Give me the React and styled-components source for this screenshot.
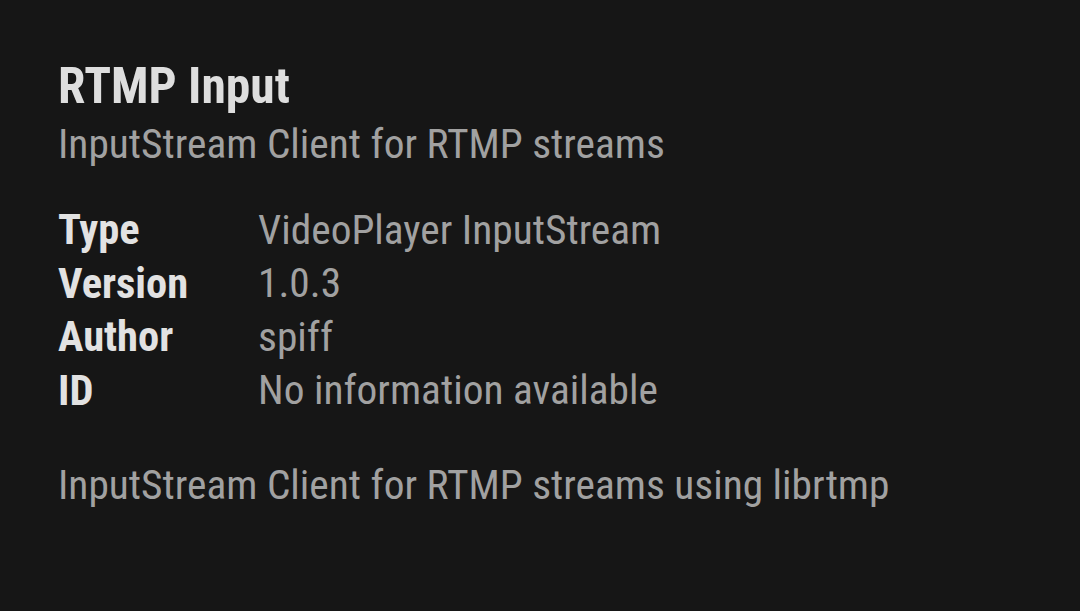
import React from "react";
import styled, { createGlobalStyle } from "styled-components";

const GlobalStyle = createGlobalStyle`
  html, body {
    margin: 0;
    padding: 0;
    background: #161616;
  }
  body {
    font-family: Roboto, "Liberation Sans", sans-serif;
    font-stretch: 80%;
  }
`;

const Page = styled.div`
  width: 1080px;
  height: 611px;
  box-sizing: border-box;
  padding: 56px 58px 0;
  display: flex;
  flex-direction: column;
  background: #161616;
  overflow: hidden;
`;

const Title = styled.h1`
  margin: 0;
  font-size: 49.5px;
  line-height: 60px;
  font-weight: 700;
  color: #dedede;
`;

const Subtitle = styled.div`
  margin-top: 3px;
  font-size: 41.4px;
  line-height: 50px;
  color: #a1a1a1;
`;

const InfoGrid = styled.div`
  margin-top: 34px;
  display: grid;
  grid-template-columns: 200px 1fr;
  grid-auto-rows: 53.5px;
  align-items: center;
`;

const Label = styled.div`
  font-size: 42.5px;
  font-weight: 700;
  color: #e2e2e2;
`;

const Value = styled.div`
  font-size: 41.4px;
  color: #a1a1a1;
`;

const Description = styled.p`
  margin: 43px 0 0;
  font-size: 41.4px;
  line-height: 50px;
  color: #a1a1a1;
`;

const rows = [
  ["Type", "VideoPlayer InputStream"],
  ["Version", "1.0.3"],
  ["Author", "spiff"],
  ["ID", "No information available"],
];

const App = () => {
  return (
    <>
      <GlobalStyle />
      <Page>
        <Title>RTMP Input</Title>
        <Subtitle>InputStream Client for RTMP streams</Subtitle>
        <InfoGrid>
          {rows.map(([label, value]) => (
            <React.Fragment key={label}>
              <Label>{label}</Label>
              <Value>{value}</Value>
            </React.Fragment>
          ))}
        </InfoGrid>
        <Description>InputStream Client for RTMP streams using librtmp</Description>
      </Page>
    </>
  );
};

export default App;
